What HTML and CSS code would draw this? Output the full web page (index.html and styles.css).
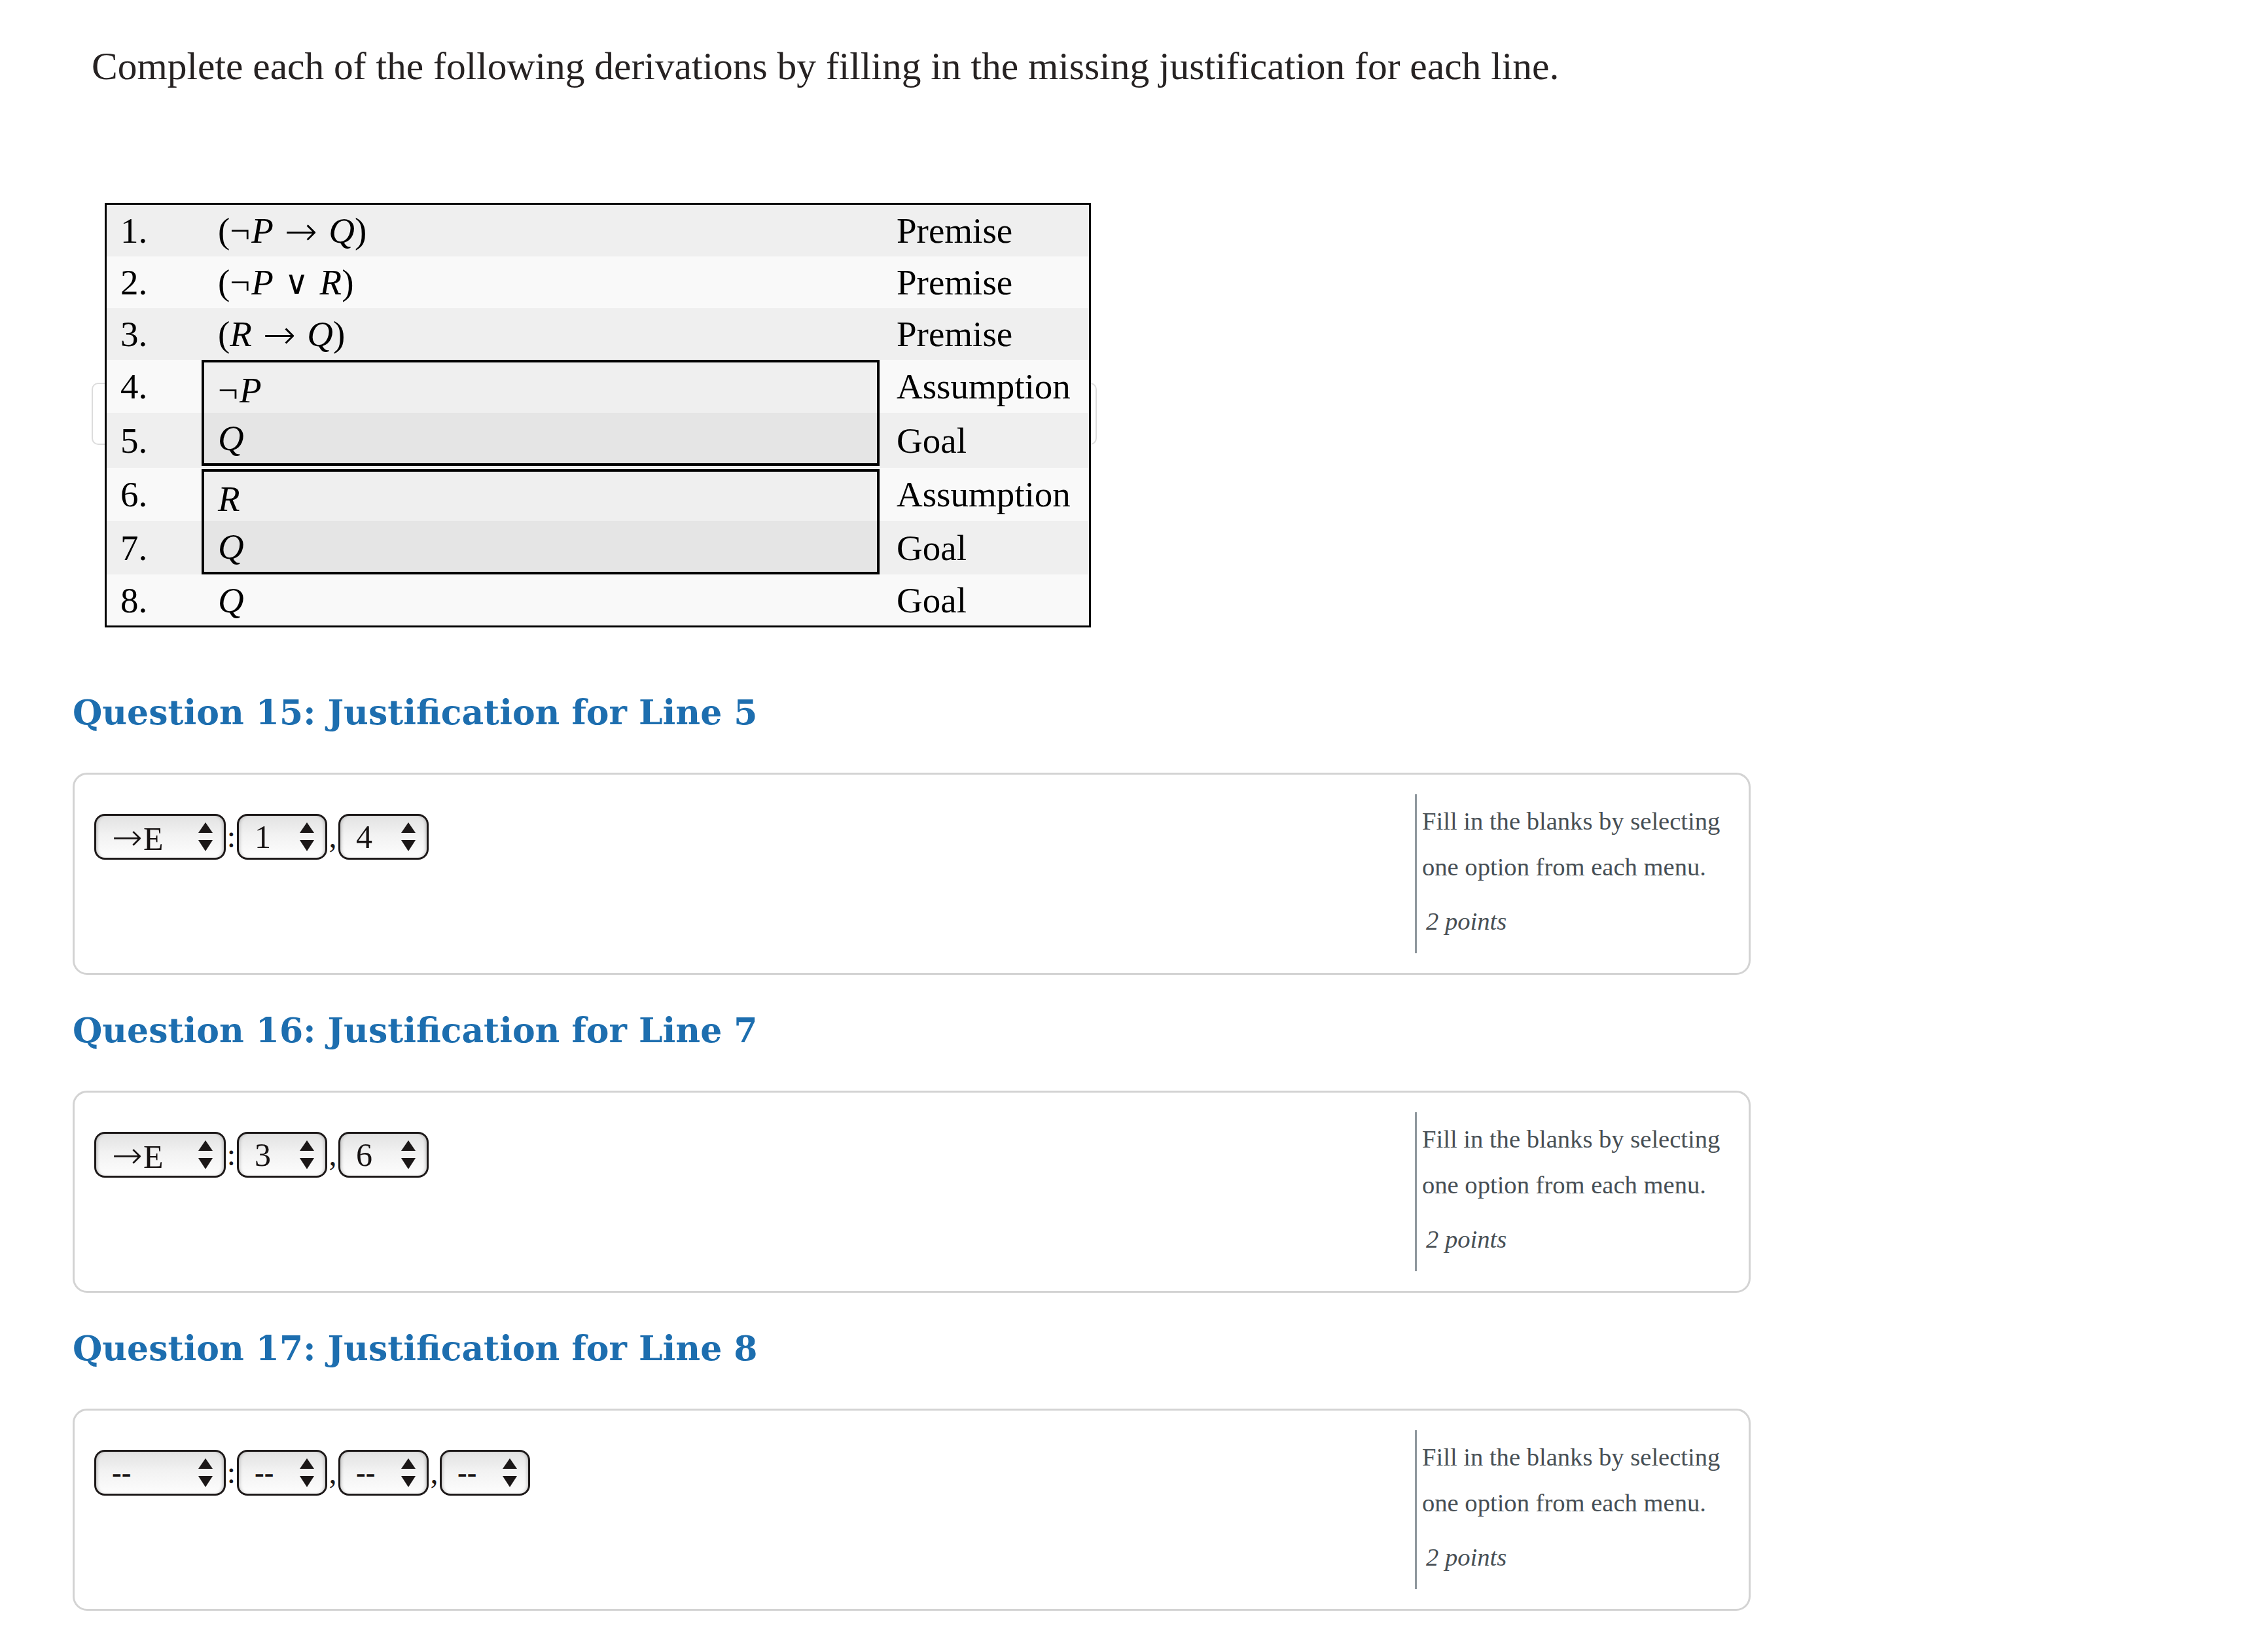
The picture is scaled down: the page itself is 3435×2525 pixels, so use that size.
FILE: index.html
```html
<!DOCTYPE html>
<html lang="en">
<head>
<meta charset="utf-8">
<title>Derivations</title>
<link rel="stylesheet" href="styles.css">
</head>
<body>
<div class="page">
  <p class="intro">Complete each of the following derivations by filling in the missing justification for each line.</p>

  <div class="deriv-wrap">
    <div class="ghost"></div>
    <div class="deriv">
      <div class="line l1">
        <span class="num">1.</span>
        <span class="fml">(<span class="neg">¬</span><i>P</i><span class="rel">→</span><i>Q</i>)</span>
        <span class="just">Premise</span>
      </div>
      <div class="line l2">
        <span class="num">2.</span>
        <span class="fml">(<span class="neg">¬</span><i>P</i><span class="rel or">∨</span><i>R</i>)</span>
        <span class="just">Premise</span>
      </div>
      <div class="line l3">
        <span class="num">3.</span>
        <span class="fml">(<i>R</i><span class="rel">→</span><i>Q</i>)</span>
        <span class="just">Premise</span>
      </div>
      <div class="line l4">
        <span class="num">4.</span>
        <span class="fml sub-top"><span class="neg">¬</span><i>P</i></span>
        <span class="just">Assumption</span>
      </div>
      <div class="line l5">
        <span class="num">5.</span>
        <span class="fml sub-bot"><i>Q</i></span>
        <span class="just">Goal</span>
      </div>
      <div class="line l6">
        <span class="num">6.</span>
        <span class="fml sub-top second"><i>R</i></span>
        <span class="just">Assumption</span>
      </div>
      <div class="line l7">
        <span class="num">7.</span>
        <span class="fml sub-bot last"><i>Q</i></span>
        <span class="just">Goal</span>
      </div>
      <div class="line l8">
        <span class="num">8.</span>
        <span class="fml"><i>Q</i></span>
        <span class="just">Goal</span>
      </div>
    </div>
  </div>

  <section class="question">
    <h2 class="q-title">Question 15: Justification for Line 5</h2>
    <div class="qbox">
      <div class="answers">
        <span class="sel wide"><span class="val"><span class="arrow">→</span>E</span><svg class="arr" viewBox="0 0 22 44" width="22" height="44"><path d="M11 0 L22 16 L0 16 Z M0 27 L22 27 L11 44 Z"/></svg></span>
        <span class="sep">:</span>
        <span class="sel narrow"><span class="val">1</span><svg class="arr" viewBox="0 0 22 44" width="22" height="44"><path d="M11 0 L22 16 L0 16 Z M0 27 L22 27 L11 44 Z"/></svg></span>
        <span class="sep">,</span>
        <span class="sel narrow"><span class="val">4</span><svg class="arr" viewBox="0 0 22 44" width="22" height="44"><path d="M11 0 L22 16 L0 16 Z M0 27 L22 27 L11 44 Z"/></svg></span>
      </div>
      <div class="info">
        <p>Fill in the blanks by selecting one option from each menu.</p>
        <p class="pts">2 points</p>
      </div>
    </div>
  </section>

  <section class="question">
    <h2 class="q-title">Question 16: Justification for Line 7</h2>
    <div class="qbox">
      <div class="answers">
        <span class="sel wide"><span class="val"><span class="arrow">→</span>E</span><svg class="arr" viewBox="0 0 22 44" width="22" height="44"><path d="M11 0 L22 16 L0 16 Z M0 27 L22 27 L11 44 Z"/></svg></span>
        <span class="sep">:</span>
        <span class="sel narrow"><span class="val">3</span><svg class="arr" viewBox="0 0 22 44" width="22" height="44"><path d="M11 0 L22 16 L0 16 Z M0 27 L22 27 L11 44 Z"/></svg></span>
        <span class="sep">,</span>
        <span class="sel narrow"><span class="val">6</span><svg class="arr" viewBox="0 0 22 44" width="22" height="44"><path d="M11 0 L22 16 L0 16 Z M0 27 L22 27 L11 44 Z"/></svg></span>
      </div>
      <div class="info">
        <p>Fill in the blanks by selecting one option from each menu.</p>
        <p class="pts">2 points</p>
      </div>
    </div>
  </section>

  <section class="question">
    <h2 class="q-title">Question 17: Justification for Line 8</h2>
    <div class="qbox">
      <div class="answers">
        <span class="sel wide"><span class="val dash">--</span><svg class="arr" viewBox="0 0 22 44" width="22" height="44"><path d="M11 0 L22 16 L0 16 Z M0 27 L22 27 L11 44 Z"/></svg></span>
        <span class="sep">:</span>
        <span class="sel narrow"><span class="val dash">--</span><svg class="arr" viewBox="0 0 22 44" width="22" height="44"><path d="M11 0 L22 16 L0 16 Z M0 27 L22 27 L11 44 Z"/></svg></span>
        <span class="sep">,</span>
        <span class="sel narrow"><span class="val dash">--</span><svg class="arr" viewBox="0 0 22 44" width="22" height="44"><path d="M11 0 L22 16 L0 16 Z M0 27 L22 27 L11 44 Z"/></svg></span>
        <span class="sep">,</span>
        <span class="sel narrow"><span class="val dash">--</span><svg class="arr" viewBox="0 0 22 44" width="22" height="44"><path d="M11 0 L22 16 L0 16 Z M0 27 L22 27 L11 44 Z"/></svg></span>
      </div>
      <div class="info">
        <p>Fill in the blanks by selecting one option from each menu.</p>
        <p class="pts">2 points</p>
      </div>
    </div>
  </section>
</div>
</body>
</html>
```

FILE: styles.css
```css
html, body {
  margin: 0;
  padding: 0;
  background: #ffffff;
}

body {
  font-family: "Liberation Serif", "DejaVu Serif", serif;
  color: #000;
}

.page {
  width: 2564px;
  padding-left: 111px;
  padding-bottom: 60px;
}

.intro {
  margin: 0;
  padding: 67px 0 0 29px;
  font-size: 59.5px;
  line-height: 68px;
  color: #262222;
}

/* ---------- derivation table ---------- */
.deriv-wrap {
  position: relative;
  width: 1507px;
  margin: 175px 0 100px 49px;
}

.ghost {
  position: absolute;
  left: -20px;
  top: 275px;
  width: 1536px;
  height: 95px;
  box-sizing: border-box;
  border: 2px solid #dcdcdc;
  border-radius: 10px;
}

.deriv {
  position: relative;
  border: 3px solid #000;
  font-size: 55px;
}

.line {
  display: flex;
  height: 79px;
  background: #f9f9f9;
}

.line:nth-child(odd) {
  background: #efefef;
}

.l4, .l6 { height: 81px; }
.l5 { height: 84px; }
.l7 { height: 82px; }
.l8 { height: 78px; }

.num,
.fml,
.just {
  display: flex;
  align-items: center;
  box-sizing: border-box;
  white-space: nowrap;
}

.num {
  width: 145px;
  padding-left: 21px;
}

.fml {
  width: 1036px;
  padding-left: 25px;
}

.just {
  flex: 1;
  padding-left: 26px;
}

.fml i {
  font-style: italic;
}

.neg {
  margin-right: 2px;
}

.rel {
  font-family: "DejaVu Sans", sans-serif;
  font-size: 60px;
  font-weight: 300;
  margin: 0 17px;
}

.rel.or {
  font-family: "DejaVu Serif", serif;
  font-size: 50px;
  margin: 0 17px;
}

.sub-top {
  border: 4px solid #000;
  border-bottom: 0;
  background: rgba(0, 0, 0, 0.04);
  padding-left: 21px;
  padding-top: 8px;
}

.sub-top.second {
  margin-top: 2px;
}

.sub-bot {
  border: 4px solid #000;
  border-top: 0;
  background: rgba(0, 0, 0, 0.04);
  padding-left: 21px;
  margin-bottom: 3px;
}

.sub-bot.last {
  margin-bottom: 0;
}

/* ---------- questions ---------- */
.question {
  margin-top: 55px;
}

.q-title {
  margin: 0;
  font-family: "DejaVu Serif", serif;
  font-weight: bold;
  font-size: 52px;
  line-height: 60px;
  color: #1d6eaf;
}

.qbox {
  display: flex;
  height: 309px;
  margin-top: 62px;
  box-sizing: border-box;
  border: 3px solid #d3d3d3;
  border-radius: 22px;
  padding: 30px;
}

.answers {
  flex: 1;
  display: flex;
  align-items: flex-start;
  padding-top: 30px;
}

.sel {
  display: flex;
  align-items: center;
  justify-content: space-between;
  height: 70px;
  box-sizing: border-box;
  border: 3px solid #1d1919;
  border-radius: 16px;
  padding: 0 17px 0 24px;
  background: linear-gradient(#e2e2e2, #f2f2f2 45%, #fdfdfd);
  box-shadow: inset 4px 0 5px -3px rgba(0, 0, 0, 0.25),
              inset -4px 0 5px -3px rgba(0, 0, 0, 0.25);
  font-size: 50px;
  color: #161212;
}

.sel .arrow {
  font-family: "DejaVu Sans", sans-serif;
  font-size: 56px;
  font-weight: 300;
  margin-right: 1px;
}

.sel.wide {
  width: 201px;
}

.sel.narrow {
  width: 138px;
}

.val.dash {
  font-weight: bold;
  font-size: 44px;
}

.arr {
  display: block;
  fill: #1b1717;
}

.sep {
  width: 17px;
  height: 70px;
  line-height: 70px;
  text-align: center;
  font-size: 48px;
  color: #1b1717;
}

.info {
  width: 480px;
  box-sizing: border-box;
  border-left: 3px solid #8f979d;
  padding: 6px 0 0 8px;
  font-size: 38.6px;
  line-height: 70px;
  color: #474f55;
}

.info p {
  margin: 0;
}

.info .pts {
  margin-top: 13px;
  padding-left: 6px;
  font-style: italic;
}
```
